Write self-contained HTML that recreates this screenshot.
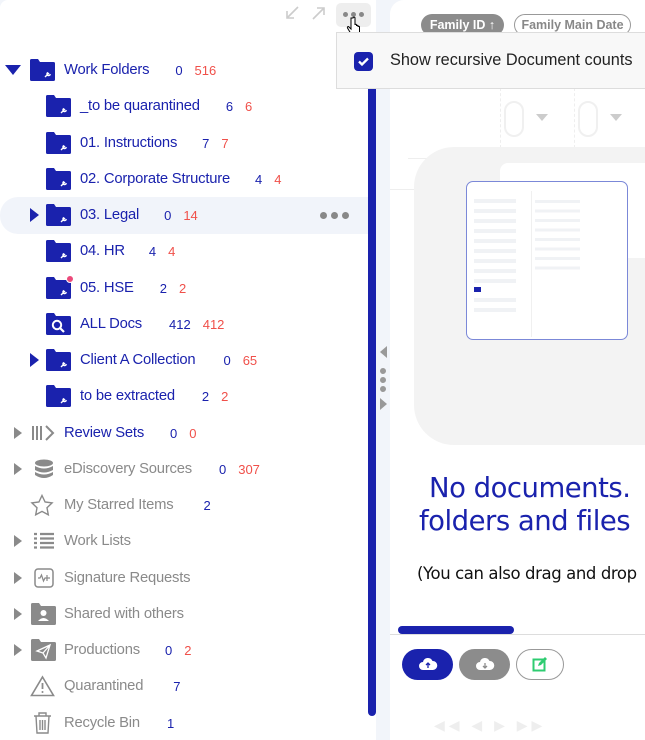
<!DOCTYPE html>
<html><head><meta charset="utf-8"><style>
*{margin:0;padding:0;box-sizing:border-box}
body{width:645px;height:740px;overflow:hidden;background:#f2f5fa;font-family:"Liberation Sans",Arial,sans-serif;position:relative}
.a{position:absolute}
.lp{position:absolute;left:0;top:0;width:376px;height:740px;background:#fff;border-top-left-radius:8px}
.rp{position:absolute;left:390px;top:0;width:255px;height:740px;background:#fff;border-top-left-radius:14px;overflow:hidden}
.row{position:absolute;left:0;height:22px;display:flex;align-items:center;white-space:nowrap}
.t{font-size:14.8px;color:#1a22ad;letter-spacing:-0.2px}
.g{color:#8a8a8a}
.n{font-size:13px;color:#1a22ad;margin-left:25px}
.r{font-size:13px;color:#f0504a;margin-left:12px}
.tri{width:0;height:0;border-top:7px solid transparent;border-bottom:7px solid transparent;border-left:9px solid #1a22ad}
.trig{width:0;height:0;border-top:6px solid transparent;border-bottom:6px solid transparent;border-left:8px solid #8a8a8a}
</style></head><body>
<div class="lp"></div>
<svg class="a" style="left:284px;top:5px" width="16" height="16"><path d="M14 2L3 13M3 6V13H10" stroke="#ccc" stroke-width="1.6" fill="none"/></svg>
<svg class="a" style="left:311px;top:5px" width="16" height="16"><path d="M2 14L13 3M6 3H13V10" stroke="#ccc" stroke-width="1.6" fill="none"/></svg>
<div class="a" style="left:336px;top:3px;width:35px;height:24px;background:#eee;border-radius:5px"></div>
<div class="a" style="left:343px;top:12px;width:5px;height:5px;border-radius:50%;background:#888"></div>
<div class="a" style="left:351px;top:12px;width:5px;height:5px;border-radius:50%;background:#888"></div>
<div class="a" style="left:359px;top:12px;width:5px;height:5px;border-radius:50%;background:#888"></div>
<svg class="a" style="left:346px;top:16px" width="16" height="22"><path d="M5 2v11l-2-2c-1-1-2 0-1.5 1l3 5c1 2 2 3 4 3h2c2 0 3-2 3-4v-5c0-1-1.5-1-1.5 0v-1c0-1-1.5-1-1.5 0v-1c0-1-1.5-1-1.5 0V2c0-1.2-2-1.2-2 0z" fill="#fff" stroke="#000" stroke-width="1"/></svg>
<div class="a" style="left:0;top:197px;width:370px;height:37px;background:#f1f4fa;border-radius:18px 0 0 18px"></div>
<div class="a" style="left:320px;top:212px;width:7px;height:7px;border-radius:50%;background:#888"></div>
<div class="a" style="left:331px;top:212px;width:7px;height:7px;border-radius:50%;background:#888"></div>
<div class="a" style="left:342px;top:212px;width:7px;height:7px;border-radius:50%;background:#888"></div>

<svg width="0" height="0" style="position:absolute"><defs>
<symbol id="f" viewBox="0 0 25 22"><path d="M0 1.5Q0 0 1.5 0H8L10 3H23.5Q25 3 25 4.5V20.5Q25 22 23.5 22H1.5Q0 22 0 20.5Z" fill="#1a22ad"/><path d="M15 18l4-4M18 13.5a1.6 1.6 0 1 0 2.2 1.6" stroke="#fff" stroke-width="1.4" fill="none"/></symbol>
</defs></svg>

<div class="row" style="top:59px;left:5px"><div class="tri" style="border:none;border-left:8px solid transparent;border-right:8px solid transparent;border-top:10px solid #1a22ad;margin-right:9px"></div><svg width="25" height="22"><use href="#f"/></svg><span class="t" style="margin-left:9px">Work Folders</span><span class="n" style="margin-left:26px">0</span><span class="r">516</span></div>
<div class="row" style="top:95px;left:46px"><svg width="25" height="22"><use href="#f"/></svg><span class="t" style="margin-left:9px">_to be quarantined</span><span class="n" style="margin-left:26px">6</span><span class="r">6</span></div>
<div class="row" style="top:132px;left:46px"><svg width="25" height="22"><use href="#f"/></svg><span class="t" style="margin-left:9px">01. Instructions</span><span class="n">7</span><span class="r">7</span></div>
<div class="row" style="top:168px;left:46px"><svg width="25" height="22"><use href="#f"/></svg><span class="t" style="margin-left:9px">02. Corporate Structure</span><span class="n">4</span><span class="r">4</span></div>
<div class="row" style="top:204px;left:30px"><div class="tri" style="margin-right:7px"></div><svg width="25" height="22"><use href="#f"/></svg><span class="t" style="margin-left:9px">03. Legal</span><span class="n">0</span><span class="r">14</span></div>
<div class="row" style="top:240px;left:46px"><svg width="25" height="22"><use href="#f"/></svg><span class="t" style="margin-left:9px">04. HR</span><span class="n" style="margin-left:24px">4</span><span class="r">4</span></div>
<div class="row" style="top:277px;left:46px"><svg width="25" height="22"><use href="#f"/></svg><span class="t" style="margin-left:9px">05. HSE</span><span class="n" style="margin-left:26px">2</span><span class="r">2</span></div>
<div class="a" style="left:66px;top:275px;width:8px;height:8px;border-radius:50%;background:#ec4a7a;border:1px solid #fff"></div>
<div class="row" style="top:313px;left:46px"><svg width="25" height="22"><path d="M0 1.5Q0 0 1.5 0H8L10 3H23.5Q25 3 25 4.5V20.5Q25 22 23.5 22H1.5Q0 22 0 20.5Z" fill="#1a22ad"/><circle cx="11" cy="12" r="4.2" stroke="#fff" stroke-width="2" fill="none"/><path d="M14 15l4 4" stroke="#fff" stroke-width="2.2"/></svg><span class="t" style="margin-left:9px">ALL Docs</span><span class="n" style="margin-left:27px">412</span><span class="r">412</span></div>
<div class="row" style="top:349px;left:30px"><div class="tri" style="margin-right:7px"></div><svg width="25" height="22"><use href="#f"/></svg><span class="t" style="margin-left:9px">Client A Collection</span><span class="n" style="margin-left:28px">0</span><span class="r">65</span></div>
<div class="row" style="top:385px;left:46px"><svg width="25" height="22"><use href="#f"/></svg><span class="t" style="margin-left:9px">to be extracted</span><span class="n" style="margin-left:27px">2</span><span class="r">2</span></div>

<div class="row" style="top:422px;left:14px"><div class="trig" style="margin-right:8px"></div><svg width="26" height="20"><path d="M3 3v14M7 3v14M11 3v14M16 3l7 7-7 7" stroke="#8a8a8a" stroke-width="2" fill="none"/></svg><span class="t" style="margin-left:8px">Review Sets</span><span class="n" style="margin-left:26px">0</span><span class="r">0</span></div>
<div class="row" style="top:458px;left:14px"><div class="trig" style="margin-right:11px"></div><svg width="22" height="22"><ellipse cx="11" cy="5" rx="9" ry="3.5" fill="#8a8a8a"/><path d="M2 8q9 5 18 0v4q-9 5-18 0z M2 14q9 5 18 0v3q-9 6-18 0z" fill="#8a8a8a"/></svg><span class="t g" style="margin-left:9px">eDiscovery Sources</span><span class="n" style="margin-left:27px">0</span><span class="r">307</span></div>
<div class="row" style="top:494px;left:30px"><svg width="24" height="22"><path d="M12 1.5l3.1 6.5 7 .9-5.1 4.9 1.3 7-6.3-3.4-6.3 3.4 1.3-7-5.1-4.9 7-.9z" stroke="#8a8a8a" stroke-width="1.4" fill="none"/></svg><span class="t g" style="margin-left:10px">My Starred Items</span><span class="n" style="margin-left:30px">2</span></div>
<div class="row" style="top:530px;left:14px"><div class="trig" style="margin-right:11px"></div><svg width="22" height="20"><path d="M1 3h3M7 3h14M1 7.5h3M7 7.5h14M1 12h3M7 12h14M1 16.5h3M7 16.5h14" stroke="#8a8a8a" stroke-width="2.2"/></svg><span class="t g" style="margin-left:9px">Work Lists</span></div>
<div class="row" style="top:567px;left:14px"><div class="trig" style="margin-right:11px"></div><svg width="22" height="22"><rect x="2" y="2" width="18" height="18" rx="3" stroke="#8a8a8a" stroke-width="1.5" fill="none"/><path d="M5 11h2l1.5-3 2 6 1.5-3h5M14 8v6" stroke="#8a8a8a" stroke-width="1.2" fill="none"/></svg><span class="t g" style="margin-left:9px">Signature Requests</span></div>
<div class="row" style="top:603px;left:14px"><div class="trig" style="margin-right:9px"></div><svg width="25" height="22"><path d="M0 1.5Q0 0 1.5 0H8L10 3H23.5Q25 3 25 4.5V20.5Q25 22 23.5 22H1.5Q0 22 0 20.5Z" fill="#8a8a8a"/><circle cx="12.5" cy="10" r="3" fill="#fff"/><path d="M7 18q5.5-6 11 0z" fill="#fff"/></svg><span class="t g" style="margin-left:8px">Shared with others</span></div>
<div class="row" style="top:639px;left:14px"><div class="trig" style="margin-right:9px"></div><svg width="25" height="22"><path d="M0 1.5Q0 0 1.5 0H8L10 3H23.5Q25 3 25 4.5V20.5Q25 22 23.5 22H1.5Q0 22 0 20.5Z" fill="#8a8a8a"/><path d="M6 12l13-6-4 13-3-5zM12 14l7-8" stroke="#fff" stroke-width="1.3" fill="none"/></svg><span class="t g" style="margin-left:8px">Productions</span><span class="n" style="margin-left:25px">0</span><span class="r">2</span></div>
<div class="row" style="top:675px;left:30px"><svg width="25" height="22"><path d="M12.5 2L23.5 20.5H1.5Z" stroke="#8a8a8a" stroke-width="1.6" fill="none"/><path d="M12.5 8v6" stroke="#8a8a8a" stroke-width="1.8"/><circle cx="12.5" cy="17" r="1" fill="#8a8a8a"/></svg><span class="t g" style="margin-left:9px">Quarantined</span><span class="n" style="margin-left:30px">7</span></div>
<div class="row" style="top:712px;left:30px"><svg width="25" height="24"><path d="M4 5h17M9 5V2h7v3M6 5l1 17h11l1-17M10 9v10M12.5 9v10M15 9v10" stroke="#8a8a8a" stroke-width="1.4" fill="none"/></svg><span class="t g" style="margin-left:9px">Recycle Bin</span><span class="n" style="margin-left:27px">1</span></div>

<div class="a" style="left:368px;top:40px;width:8px;height:676px;background:#1a22ad;border-radius:0 0 4px 4px"></div>
<div class="a" style="left:380px;top:346px;border-top:6px solid transparent;border-bottom:6px solid transparent;border-right:7px solid #999"></div>
<div class="a" style="left:380px;top:368px;width:6px;height:6px;border-radius:50%;background:#999"></div>
<div class="a" style="left:380px;top:377px;width:6px;height:6px;border-radius:50%;background:#999"></div>
<div class="a" style="left:380px;top:386px;width:6px;height:6px;border-radius:50%;background:#999"></div>
<div class="a" style="left:380px;top:398px;border-top:6px solid transparent;border-bottom:6px solid transparent;border-left:7px solid #999"></div>

<div class="rp">
 <div class="a" style="left:31px;top:14px;width:83px;height:22px;border-radius:11px;background:#8c8c8c;color:#fff;font-size:12.5px;font-weight:bold;line-height:22px;text-align:center">Family ID ↑</div>
 <div class="a" style="left:124px;top:14px;width:117px;height:22px;border-radius:11px;border:1px solid #999;color:#888;font-size:12.5px;font-weight:bold;line-height:20px;text-align:center">Family Main Date</div>
 <div class="a" style="left:110px;top:88px;height:60px;border-left:1px dashed #eee"></div>
 <div class="a" style="left:184px;top:88px;height:60px;border-left:1px dashed #eee"></div>
 <div class="a" style="left:256px;top:88px;height:60px;border-left:1px dashed #eee"></div>
 <div class="a" style="left:114px;top:101px;width:20px;height:36px;border:2px solid #f0f0f0;border-radius:10px"></div>
 <div class="a" style="left:188px;top:101px;width:20px;height:36px;border:2px solid #f0f0f0;border-radius:10px"></div>
 <div class="a" style="left:146px;top:114px;border-left:6px solid transparent;border-right:6px solid transparent;border-top:7px solid #ccc"></div>
 <div class="a" style="left:220px;top:114px;border-left:6px solid transparent;border-right:6px solid transparent;border-top:7px solid #ccc"></div>
 <div class="a" style="left:18px;top:158px;width:40px;border-top:1px solid #eee"></div>
 <div class="a" style="left:0;top:189px;width:30px;border-top:1px solid #eee"></div>
 <div class="a" style="left:24px;top:147px;width:260px;height:298px;background:#f3f3f3;border-radius:40px 0 0 40px"></div>
 <div class="a" style="left:110px;top:163px;width:160px;height:95px;background:#fff;border-radius:8px 0 0 0"></div>
 <div class="a" style="left:76px;top:181px;width:162px;height:159px;background:#fff;border:1.5px solid #7b88d8;border-radius:7px"></div>
 <div class="a" style="left:141px;top:191px;height:146px;border-left:1px solid #f0f0f0"></div>
 <div class="a" style="left:84px;top:199px;width:42px;height:90px;background:repeating-linear-gradient(#f0f2f5 0 4px,#fff 4px 10px)"></div>
 <div class="a" style="left:84px;top:287px;width:7px;height:5px;background:#1a22ad"></div>
 <div class="a" style="left:84px;top:298px;width:42px;height:14px;background:repeating-linear-gradient(#f0f2f5 0 4px,#fff 4px 10px)"></div>
 <div class="a" style="left:145px;top:200px;width:45px;height:72px;background:repeating-linear-gradient(#f0f2f5 0 3px,#fff 3px 9.5px)"></div>
 <div class="a" style="left:0;top:634px;width:255px;border-top:1px solid #ddd"></div>
</div>
<div class="a" style="left:396px;top:472px;width:260px;color:#1a22ad;line-height:33px;white-space:nowrap;font-family:'DejaVu Sans',sans-serif;letter-spacing:-0.5px;font-size:27.5px"><div style="margin-left:33px">No documents.</div><div style="margin-left:23px">folders and files</div></div>
<div class="a" style="left:417px;top:564px;font-size:16.5px;color:#111;white-space:nowrap;font-family:'DejaVu Sans',sans-serif;letter-spacing:-0.4px">(You can also drag and drop</div>
<div class="a" style="left:398px;top:626px;width:116px;height:8px;border-radius:4px;background:#1a22ad"></div>
<div class="a" style="left:402px;top:649px;width:51px;height:31px;border-radius:16px;background:#1a22ad"></div>
<svg class="a" style="left:418px;top:656px" width="20" height="16"><path d="M5 14a4 4 0 0 1 0-8 5 5 0 0 1 9.5-1A4 4 0 0 1 15 14z" fill="#fff"/><path d="M10 12V7M8 9l2-2 2 2" stroke="#1a22ad" stroke-width="1.3" fill="none"/></svg>
<div class="a" style="left:459px;top:649px;width:51px;height:31px;border-radius:16px;background:#8c8c8c"></div>
<svg class="a" style="left:475px;top:656px" width="20" height="16"><path d="M5 14a4 4 0 0 1 0-8 5 5 0 0 1 9.5-1A4 4 0 0 1 15 14z" fill="#fff"/><path d="M10 7v5M8 10l2 2 2-2" stroke="#8c8c8c" stroke-width="1.3" fill="none"/></svg>
<div class="a" style="left:516px;top:649px;width:48px;height:31px;border-radius:16px;border:1px solid #999;background:#fff"></div>
<svg class="a" style="left:532px;top:656px" width="16" height="16"><rect x="1.5" y="3.5" width="11" height="11" stroke="#2ecc71" stroke-width="2" fill="none"/><path d="M6 10l1-3 6-6 2 2-6 6z" fill="#2ecc71"/></svg>
<div class="a" style="left:434px;top:717px;color:#eee;font-size:14px;letter-spacing:4px">◀◀ ◀ ▶ ▶▶</div>

<div class="a" style="left:336px;top:32px;width:320px;height:57px;background:#f8f8f8;border:1px solid #ddd"></div>
<div class="a" style="left:354px;top:52px;width:19px;height:19px;border-radius:4px;background:#1a22ad"></div>
<svg class="a" style="left:356px;top:54px" width="15" height="15"><path d="M3 7.5l3 3 6-6" stroke="#fff" stroke-width="2.3" fill="none"/></svg>
<div class="a" style="left:390px;top:51px;font-size:16.3px;color:#222;white-space:nowrap">Show recursive Document counts</div>
</body></html>
